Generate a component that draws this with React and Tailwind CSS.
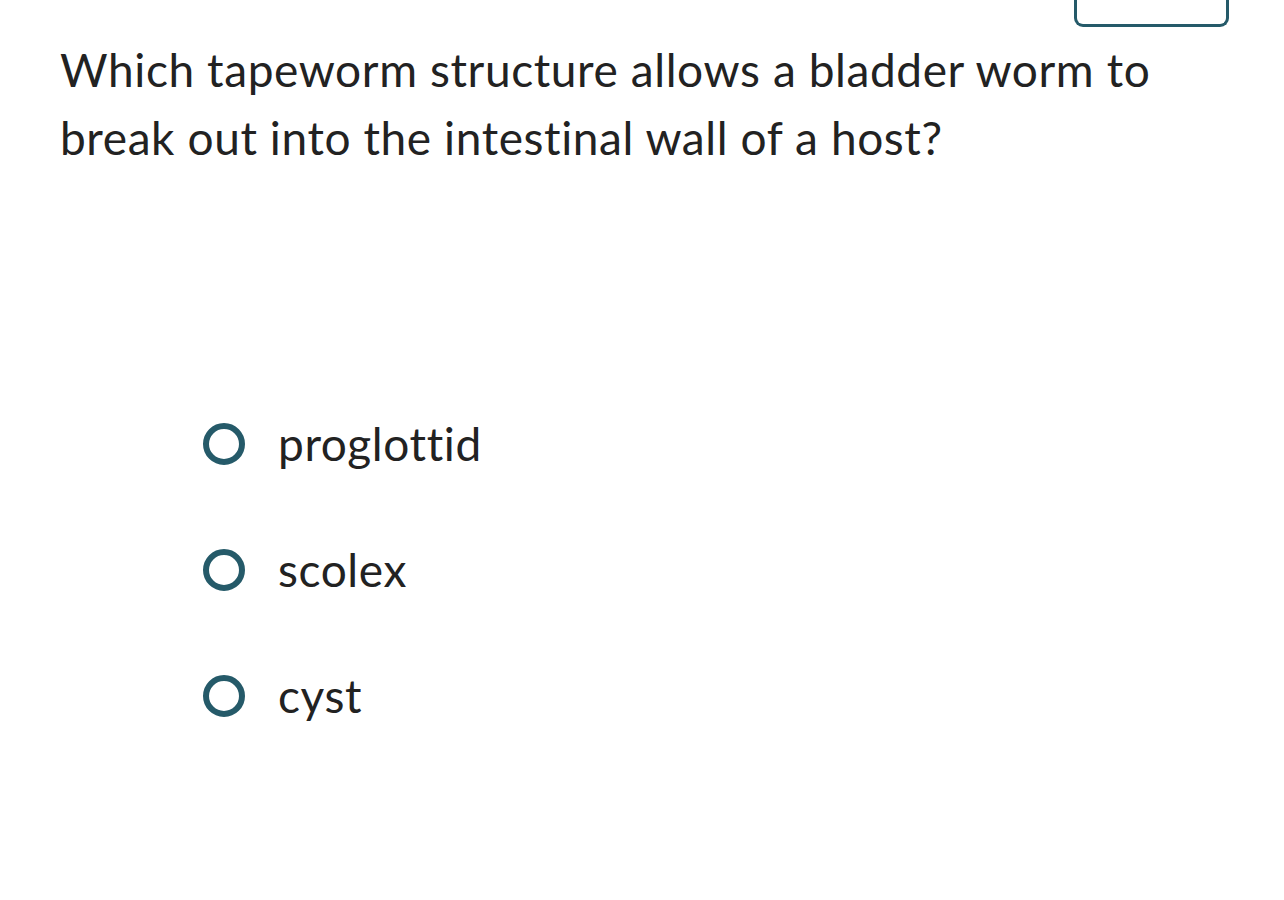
export default function App() {
  const options = ["proglottid", "scolex", "cyst"];
  return (
    <div className="w-[1284px] h-[900px] bg-white text-[#222222] overflow-hidden font-normal [font-variant-ligatures:none]" style={{ fontFamily: "Lato, 'Liberation Sans', sans-serif" }}>
      <div className="flex justify-end pr-[55px]">
        <div className="w-[155px] h-[27px] border-[3px] border-t-0 border-[#255a69] rounded-b-[9px]" />
      </div>
      <div className="pl-[60px] pr-[55px] pt-[9px]">
        <p className="text-[46px] leading-[68px] tracking-[0.6px]">
          Which tapeworm structure allows a bladder worm to break out into the intestinal wall of a host?
        </p>
        <div className="mt-[238px] pl-[143px] flex flex-col gap-[58px]">
          {options.map((o) => (
            <label key={o} className="flex items-center h-[68px]">
              <span className="w-[42px] h-[42px] rounded-full border-[6px] border-[#255a69]" />
              <span className="ml-[33px] text-[46px] leading-[68px] tracking-[0.6px]">{o}</span>
            </label>
          ))}
        </div>
      </div>
    </div>
  );
}
